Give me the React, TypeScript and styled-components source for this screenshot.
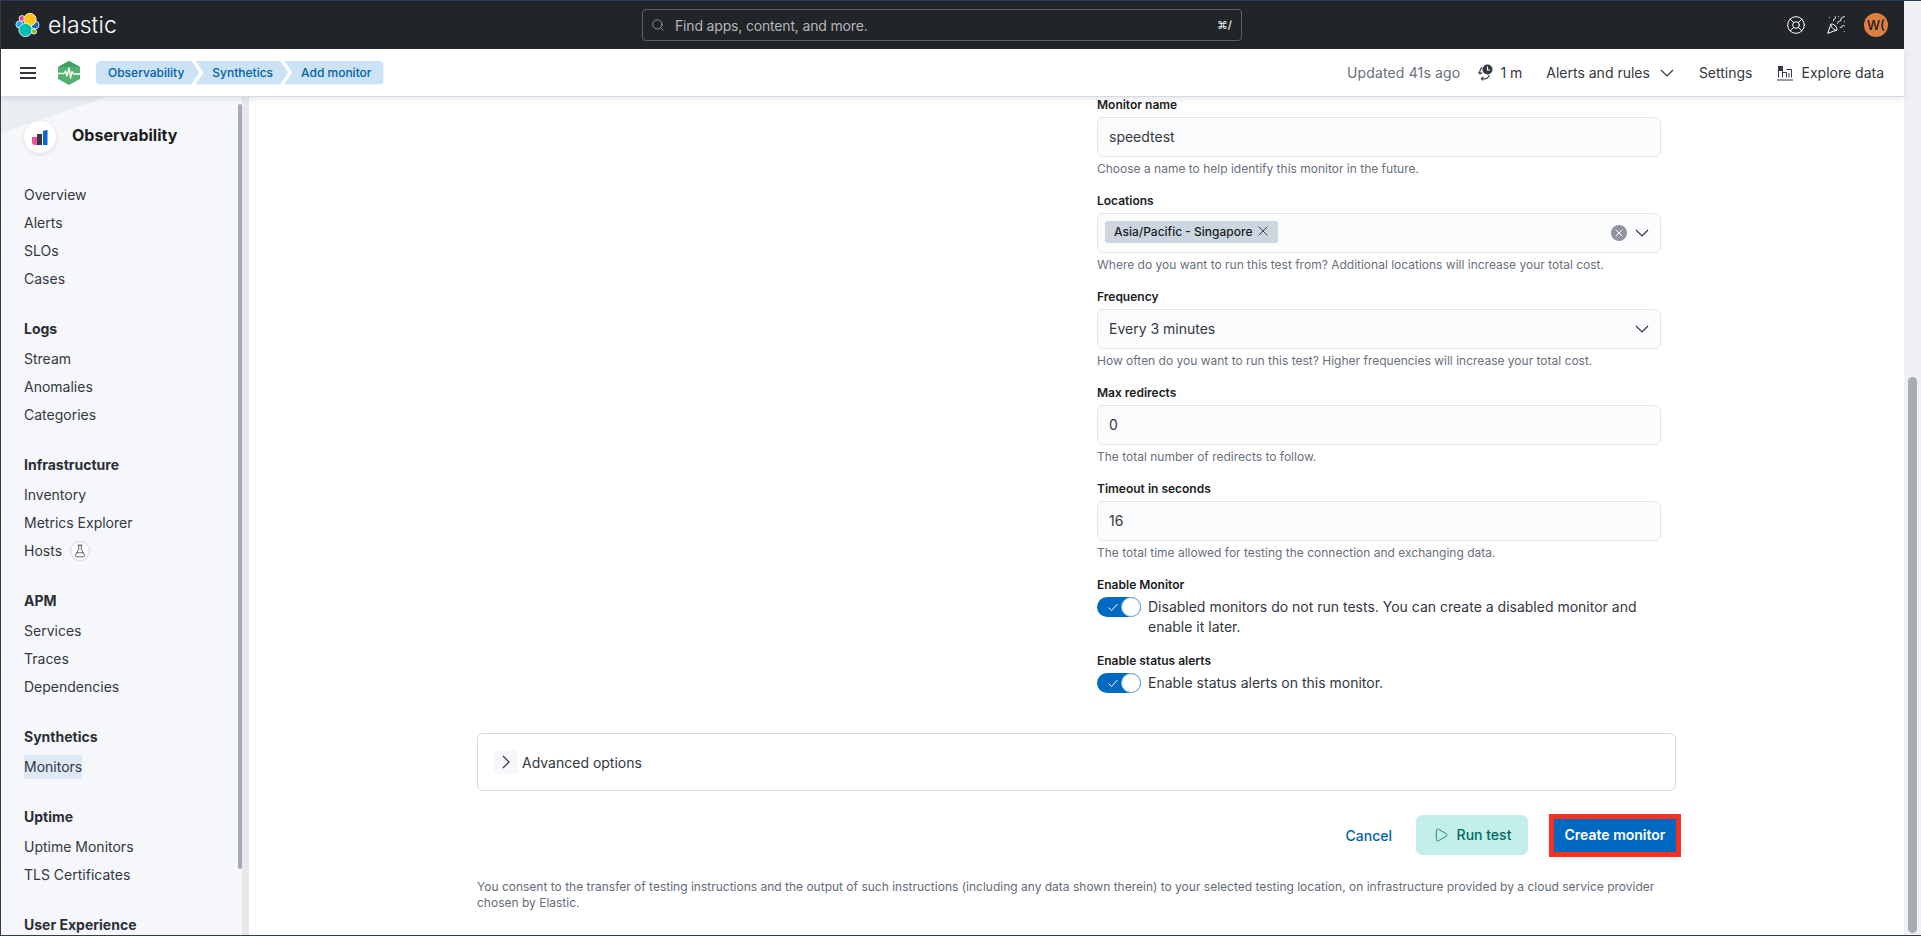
import React from "react";
import styled, { createGlobalStyle } from "styled-components";
import { FlaskConical, LifeBuoy, PartyPopper, Play, Search, X } from "lucide-react";

const GlobalStyle = createGlobalStyle`
  html, body {
    margin: 0;
    padding: 0;
    height: 100%;
    overflow: hidden;
    background: #fff;
    font-family: Inter, "Liberation Sans", sans-serif;
    color: #343741;
  }
  * {
    box-sizing: border-box;
  }
`;

const Frame = styled.div`
  width: 1921px;
  height: 936px;
  display: flex;
  overflow: hidden;
  background: #fff;
  border-top: 1px solid #2b3d4f;
  border-left: 1px solid #2b3d4f;
  border-bottom: 1px solid #2b3d4f;
`;

const Page = styled.div`
  flex: 1;
  min-width: 0;
  display: flex;
  flex-direction: column;
`;

const Gutter = styled.div`
  width: 17px;
  flex: none;
  display: flex;
  padding: 376px 4px 2px;
  background: #eef0f3;
`;

const GutterThumb = styled.div`
  flex: 1;
  border-radius: 5px;
  background: #a9adb3;
`;

const TopBar = styled.header`
  height: 48px;
  flex: none;
  display: flex;
  align-items: center;
  padding: 0 16px 0 14px;
  background: #212429;
  position: relative;
`;

const Brand = styled.div`
  width: 627px;
  display: flex;
  align-items: center;
  gap: 7px;
  color: #fff;
  font-size: 23px;
  font-weight: 300;
  letter-spacing: 0.1px;
`;

const SearchBox = styled.div`
  width: 600px;
  height: 32px;
  display: flex;
  align-items: center;
  gap: 10px;
  padding: 0 9px 0 8px;
  border: 1px solid #5d6067;
  border-radius: 4px;
  color: #b4b6ba;
  font-size: 14px;
`;

const SearchText = styled.span`
  flex: 1;
  letter-spacing: -0.17px;
`;

const Shortcut = styled.span`
  color: #d8dadd;
  font-size: 11px;
  font-weight: 600;
`;

const TopActions = styled.div`
  margin-left: auto;
  display: flex;
  align-items: center;
  color: #fff;
`;

const TopIcon = styled.span`
  display: flex;
  width: 40px;
  justify-content: center;
`;

const Avatar = styled.div`
  width: 24px;
  height: 24px;
  margin-left: 8px;
  border-radius: 50%;
  overflow: hidden;
  display: flex;
  align-items: center;
  justify-content: center;
  background: #df7f3e;
  color: #17181b;
  font-size: 13px;
  font-weight: 500;
  white-space: nowrap;
`;

const SubBar = styled.div`
  height: 48px;
  flex: none;
  display: flex;
  align-items: center;
  padding: 0 20px 0 19px;
  background: #fff;
  border-bottom: 1px solid #d3dae6;
  box-shadow: 0 2px 6px rgba(105, 112, 125, 0.16);
  position: relative;
  z-index: 2;
`;

const Burger = styled.div`
  width: 16px;
  height: 12px;
  display: flex;
  flex-direction: column;
  justify-content: space-between;
  margin-right: 21px;
`;

const BurgerLine = styled.span`
  height: 2px;
  background: #343741;
`;

const Crumbs = styled.nav`
  display: flex;
  margin-left: 15px;
`;

const Crumb = styled.span<{ $kind: "first" | "middle" | "last" }>`
  height: 24px;
  display: flex;
  align-items: center;
  font-size: 12px;
  font-weight: 500;
  color: #0061a6;
  background: #cce2f5;
  margin-left: ${(p) => (p.$kind === "first" ? "0" : "-4px")};
  padding: ${(p) =>
    p.$kind === "first" ? "0 15px 0 12px" : p.$kind === "middle" ? "0 15px 0 17px" : "0 12px 0 17px"};
  border-radius: ${(p) =>
    p.$kind === "first" ? "5px 0 0 5px" : p.$kind === "last" ? "0 5px 5px 0" : "0"};
  clip-path: ${(p) =>
    p.$kind === "first"
      ? "polygon(0 0, calc(100% - 8px) 0, 100% 50%, calc(100% - 8px) 100%, 0 100%)"
      : p.$kind === "middle"
        ? "polygon(0 0, calc(100% - 8px) 0, 100% 50%, calc(100% - 8px) 100%, 0 100%, 8px 50%)"
        : "polygon(0 0, 100% 0, 100% 100%, 0 100%, 8px 50%)"};
`;

const SubActions = styled.div`
  margin-left: auto;
  display: flex;
  align-items: center;
  font-size: 14px;
  color: #343741;
`;

const Updated = styled.span`
  color: #69707d;
  letter-spacing: 0.15px;
  margin-right: 17px;
`;

const SubAction = styled.span<{ $gap?: number; $after?: number }>`
  display: flex;
  align-items: center;
  gap: ${(p) => p.$gap ?? 8}px;
  margin-right: ${(p) => p.$after ?? 0}px;
`;

const Body = styled.div`
  flex: 1;
  min-height: 0;
  display: flex;
`;

const Sidebar = styled.aside`
  width: 248px;
  flex: none;
  position: relative;
  overflow: hidden;
  padding: 24px 24px 0 23px;
  background: #f5f7fa;
  border-right: 7px solid #e6e8ec;
`;

const SidebarWedge = styled.svg`
  position: absolute;
  top: 0;
  left: 0;
`;

const SidebarThumb = styled.div`
  position: absolute;
  top: 7px;
  bottom: 66px;
  right: 0;
  width: 4px;
  border-radius: 2px;
  background: #a5aab3;
`;

const SideHead = styled.div`
  position: relative;
  display: flex;
  align-items: center;
  gap: 16px;
  height: 32px;
  margin-bottom: 30px;
  font-size: 16px;
  font-weight: 700;
  color: #1a1c21;
`;

const SideTitle = styled.span`
  margin-bottom: 4px;
`;

const SideLogo = styled.span`
  width: 32px;
  height: 32px;
  flex: none;
  border-radius: 50%;
  background: #fff;
  display: flex;
  align-items: center;
  justify-content: center;
  box-shadow: 0 1px 4px rgba(105, 112, 125, 0.2);
`;

const NavGroup = styled.div`
  position: relative;
  display: flex;
  flex-direction: column;
  align-items: flex-start;
  gap: 4px;
  margin-bottom: 26px;
`;

const NavHeading = styled.div`
  height: 24px;
  line-height: 24px;
  margin-bottom: 2px;
  font-size: 14px;
  font-weight: 700;
  color: #2b2e36;
  white-space: nowrap;
`;

const NavItem = styled.div<{ $active?: boolean }>`
  height: 24px;
  line-height: 24px;
  display: flex;
  align-items: center;
  gap: 8px;
  font-size: 14px;
  color: #343741;
  white-space: nowrap;
  background: ${(p) => (p.$active ? "#dde9f4" : "transparent")};
`;

const BetaBadge = styled.span`
  width: 20px;
  height: 20px;
  border-radius: 50%;
  background: #fff;
  border: 1px solid #d3dae6;
  display: flex;
  align-items: center;
  justify-content: center;
`;

const Main = styled.main`
  flex: 1;
  min-width: 0;
  overflow: hidden;
  display: flex;
  justify-content: center;
`;

const Content = styled.div`
  width: 1199px;
  display: flex;
  flex-direction: column;
`;

const FormColumn = styled.div`
  width: 564px;
  margin-left: 620px;
  display: flex;
  flex-direction: column;
  gap: 16px;
`;

const Field = styled.div`
  display: flex;
  flex-direction: column;
  gap: 4px;
`;

const FieldLabel = styled.label`
  height: 16px;
  line-height: 16px;
  font-size: 12px;
  font-weight: 600;
  color: #1a1c21;
`;

const Control = styled.div`
  height: 40px;
  display: flex;
  align-items: center;
  gap: 5px;
  padding: 0 10px 0 11px;
  background: #fbfcfd;
  border: 1px solid #e3e7ee;
  border-radius: 6px;
  font-size: 14px;
  color: #343741;
`;

const ControlValue = styled.span`
  flex: 1;
  margin-bottom: 2px;
`;

const ChipArea = styled.div`
  flex: 1;
  margin: 0 0 2px -4px;
  display: flex;
`;

const Chip = styled.span`
  height: 22px;
  display: flex;
  align-items: center;
  gap: 3px;
  padding: 0 7px 2px 9px;
  border-radius: 3px;
  background: #cdd5e1;
  font-size: 12px;
  font-weight: 500;
  color: #1a1c21;
`;

const ClearDot = styled.span`
  width: 16px;
  height: 16px;
  margin-right: 2px;
  border-radius: 50%;
  background: #8d95a5;
  display: flex;
  align-items: center;
  justify-content: center;
`;

const Help = styled.div`
  height: 16px;
  line-height: 16px;
  font-size: 12px;
  color: #69707d;
`;

const SwitchRow = styled.div`
  display: flex;
  align-items: flex-start;
  gap: 7px;
  font-size: 14px;
  line-height: 20px;
  color: #343741;
`;

const Switch = styled.span`
  width: 44px;
  height: 20px;
  flex: none;
  padding-left: 10px;
  display: flex;
  align-items: center;
  justify-content: space-between;
  border-radius: 10px;
  background: #0069c1;
  color: #fff;
`;

const SwitchKnob = styled.span`
  width: 20px;
  height: 20px;
  border-radius: 50%;
  background: #fff;
  border: 1px solid #7fb0dc;
`;

const Advanced = styled.div`
  height: 58px;
  margin-top: 40px;
  display: flex;
  align-items: center;
  gap: 4px;
  padding: 0 16px;
  border: 1px solid #d3dae6;
  border-radius: 6px;
  font-size: 14px;
  color: #343741;
`;

const AdvancedToggle = styled.span`
  width: 24px;
  height: 24px;
  display: flex;
  align-items: center;
  justify-content: center;
  border-radius: 4px;
  background: #f5f7fa;
`;

const Actions = styled.div`
  margin-top: 24px;
  height: 40px;
  display: flex;
  align-items: center;
  justify-content: flex-end;
  font-size: 14px;
`;

const CancelLink = styled.span`
  color: #0061a6;
  font-weight: 500;
  margin-right: 24px;
`;

const RunButton = styled.span`
  width: 112px;
  height: 40px;
  padding-bottom: 1px;
  display: flex;
  align-items: center;
  justify-content: center;
  gap: 8px;
  border-radius: 6px;
  background: #c2efe9;
  color: #00695f;
  font-weight: 500;
  margin-right: 26px;
`;

const CreateButton = styled.span`
  width: 122px;
  height: 33px;
  padding-bottom: 1px;
  display: flex;
  align-items: center;
  justify-content: center;
  background: #0069c1;
  color: #fff;
  font-weight: 600;
  outline: 5px solid #f9301f;
`;

const Consent = styled.p`
  margin: 24px 0 0;
  font-size: 12px;
  line-height: 16px;
  color: #646b78;
`;

const ElasticLogo = () => (
  <svg width="26" height="26" viewBox="15 12 26 26">
    <g stroke="#fff" strokeWidth="0.8">
      <circle cx="22" cy="18.5" r="3" fill="#e5468f" />
      <circle cx="19.5" cy="24.5" r="3.6" fill="#1ba9f5" />
      <circle cx="35" cy="25" r="4" fill="#0a6dc9" />
      <circle cx="30" cy="19.5" r="6.2" fill="#fec514" />
      <circle cx="25.5" cy="30" r="6.6" fill="#00bfb3" />
      <circle cx="34" cy="31.5" r="2.6" fill="#7dc22f" />
    </g>
  </svg>
);

const SyntheticsLogo = () => (
  <svg width="24" height="24" viewBox="0 0 24 24">
    <path d="M12 0 L23 6 V18 L12 24 L1 18 V6 Z" fill="#54b06f" />
    <path d="M12 0 L23 6 H1 Z" fill="#3fa161" />
    <path
      d="M1 12.5 H7 L8.5 10 L10 15 L12 7 L13.5 17 L15 10.5 L16.5 13 H23"
      fill="none"
      stroke="#fff"
      strokeWidth="1.3"
      strokeLinejoin="round"
    />
  </svg>
);

const ObservabilityLogo = () => (
  <svg width="16" height="17" viewBox="0 0 16 17">
    <path d="M0 8 H6 V16 H3 Q0 16 0 13 Z" fill="#f04e98" />
    <rect x="5" y="5" width="5" height="11" fill="#343741" />
    <path d="M11 2 Q14 1 15.5 1 V16 H11 Z" fill="#0b64dd" />
  </svg>
);

const RefreshClock = () => (
  <svg width="17" height="17" viewBox="0 0 17 17" fill="none">
    <path d="M3 9.5 A6 6 0 0 1 5 3.5" stroke="#343741" strokeWidth="1.1" />
    <path d="M1.5 8 L3 10 L5 8.5" stroke="#343741" strokeWidth="1.1" />
    <path d="M12.5 11 A6 6 0 0 1 4.5 14.5" stroke="#343741" strokeWidth="1.1" />
    <path d="M6.5 13 L4.3 14.5 L6 16.5" stroke="#343741" strokeWidth="1.1" />
    <circle cx="10.5" cy="5.5" r="5" fill="#343741" />
    <path d="M10.5 2.5 V6 H13" stroke="#fff" strokeWidth="1.1" />
  </svg>
);

const ExploreIcon = () => (
  <svg width="16" height="16" viewBox="0 0 16 16" fill="none">
    <rect x="1" y="1" width="5" height="5" fill="#343741" />
    <path d="M1.5 5 V12.5 M5.5 5 V12.5 M5.5 7.5 H9.5 V12.5 M9.5 4.5 H14.5 V12.5 M12 8 V12.5" stroke="#343741" />
    <path d="M0 15 H16" stroke="#343741" />
  </svg>
);

const CheckMark = () => (
  <svg width="12" height="12" viewBox="0 0 12 12" fill="none">
    <path d="M1.5 6.5 L4.5 9.5 L10.5 3" stroke="#fff" strokeWidth="1" />
  </svg>
);

const ChevronDownGlyph = () => (
  <svg width="16" height="16" viewBox="0 0 16 16" fill="none">
    <path d="M2 5 L8 11 L14 5" stroke="#343741" strokeWidth="1.2" />
  </svg>
);

const ChevronRightGlyph = () => (
  <svg width="16" height="16" viewBox="0 0 16 16" fill="none">
    <path d="M5 2 L11 8 L5 14" stroke="#343741" strokeWidth="1.2" />
  </svg>
);

const navGroups: { title?: string; items: string[] }[] = [
  { items: ["Overview", "Alerts", "SLOs", "Cases"] },
  { title: "Logs", items: ["Stream", "Anomalies", "Categories"] },
  { title: "Infrastructure", items: ["Inventory", "Metrics Explorer", "Hosts"] },
  { title: "APM", items: ["Services", "Traces", "Dependencies"] },
  { title: "Synthetics", items: ["Monitors"] },
  { title: "Uptime", items: ["Uptime Monitors", "TLS Certificates"] },
  { title: "User Experience", items: [] },
];

const plainFields = [
  { label: "Max redirects", value: "0", help: "The total number of redirects to follow." },
  { label: "Timeout in seconds", value: "16", help: "The total time allowed for testing the connection and exchanging data." },
];

export default function App() {
  return (
    <Frame>
      <GlobalStyle />
      <Page>
        <TopBar>
          <Brand>
            <ElasticLogo />
            elastic
          </Brand>
          <SearchBox>
            <Search size={14} strokeWidth={1.25} />
            <SearchText>Find apps, content, and more.</SearchText>
            <Shortcut>⌘/</Shortcut>
          </SearchBox>
          <TopActions>
            <TopIcon>
              <LifeBuoy size={20} strokeWidth={1.2} />
            </TopIcon>
            <TopIcon>
              <PartyPopper size={20} strokeWidth={1.2} />
            </TopIcon>
            <Avatar>W(</Avatar>
          </TopActions>
        </TopBar>
        <SubBar>
          <Burger>
            <BurgerLine />
            <BurgerLine />
            <BurgerLine />
          </Burger>
          <SyntheticsLogo />
          <Crumbs>
            <Crumb $kind="first">Observability</Crumb>
            <Crumb $kind="middle">Synthetics</Crumb>
            <Crumb $kind="last">Add monitor</Crumb>
          </Crumbs>
          <SubActions>
            <Updated>Updated 41s ago</Updated>
            <SubAction $gap={6} $after={24}>
              <RefreshClock />1 m
            </SubAction>
            <SubAction $gap={9} $after={24}>
              Alerts and rules
              <ChevronDownGlyph />
            </SubAction>
            <SubAction $after={24}>Settings</SubAction>
            <SubAction $gap={9}>
              <ExploreIcon />
              Explore data
            </SubAction>
          </SubActions>
        </SubBar>
        <Body>
          <Sidebar>
            <SidebarWedge width="120" height="50" viewBox="0 0 120 50">
              <polygon points="0,0 105,0 0,36" fill="#eaedf2" />
            </SidebarWedge>
            <SidebarThumb />
            <SideHead>
              <SideLogo>
                <ObservabilityLogo />
              </SideLogo>
              <SideTitle>Observability</SideTitle>
            </SideHead>
            {navGroups.map((group) => (
              <NavGroup key={group.title ?? "root"}>
                {group.title && <NavHeading>{group.title}</NavHeading>}
                {group.items.map((item) => (
                  <NavItem key={item} $active={item === "Monitors"}>
                    {item}
                    {item === "Hosts" && (
                      <BetaBadge>
                        <FlaskConical size={14} strokeWidth={1.3} />
                      </BetaBadge>
                    )}
                  </NavItem>
                ))}
              </NavGroup>
            ))}
          </Sidebar>
          <Main>
            <Content>
              <FormColumn>
                <Field>
                  <FieldLabel>Monitor name</FieldLabel>
                  <Control>
                    <ControlValue>speedtest</ControlValue>
                  </Control>
                  <Help>Choose a name to help identify this monitor in the future.</Help>
                </Field>
                <Field>
                  <FieldLabel>Locations</FieldLabel>
                  <Control>
                    <ChipArea>
                      <Chip>
                        Asia/Pacific - Singapore
                        <X size={16} strokeWidth={1.2} />
                      </Chip>
                    </ChipArea>
                    <ClearDot>
                      <X size={12} strokeWidth={2} color="#fff" />
                    </ClearDot>
                    <ChevronDownGlyph />
                  </Control>
                  <Help>Where do you want to run this test from? Additional locations will increase your total cost.</Help>
                </Field>
                <Field>
                  <FieldLabel>Frequency</FieldLabel>
                  <Control>
                    <ControlValue>Every 3 minutes</ControlValue>
                    <ChevronDownGlyph />
                  </Control>
                  <Help>How often do you want to run this test? Higher frequencies will increase your total cost.</Help>
                </Field>
                {plainFields.map((field) => (
                  <Field key={field.label}>
                    <FieldLabel>{field.label}</FieldLabel>
                    <Control>
                      <ControlValue>{field.value}</ControlValue>
                    </Control>
                    <Help>{field.help}</Help>
                  </Field>
                ))}
                <Field>
                  <FieldLabel>Enable Monitor</FieldLabel>
                  <SwitchRow>
                    <Switch>
                      <CheckMark />
                      <SwitchKnob />
                    </Switch>
                    <span>Disabled monitors do not run tests. You can create a disabled monitor and enable it later.</span>
                  </SwitchRow>
                </Field>
                <Field>
                  <FieldLabel>Enable status alerts</FieldLabel>
                  <SwitchRow>
                    <Switch>
                      <CheckMark />
                      <SwitchKnob />
                    </Switch>
                    <span>Enable status alerts on this monitor.</span>
                  </SwitchRow>
                </Field>
              </FormColumn>
              <Advanced>
                <AdvancedToggle>
                  <ChevronRightGlyph />
                </AdvancedToggle>
                Advanced options
              </Advanced>
              <Actions>
                <CancelLink>Cancel</CancelLink>
                <RunButton>
                  <Play size={16} strokeWidth={1.2} />
                  Run test
                </RunButton>
                <CreateButton>Create monitor</CreateButton>
              </Actions>
              <Consent>
                You consent to the transfer of testing instructions and the output of such instructions (including any
                data shown therein) to your selected testing location, on infrastructure provided by a cloud service
                provider chosen by Elastic.
              </Consent>
            </Content>
          </Main>
        </Body>
      </Page>
      <Gutter>
        <GutterThumb />
      </Gutter>
    </Frame>
  );
}
